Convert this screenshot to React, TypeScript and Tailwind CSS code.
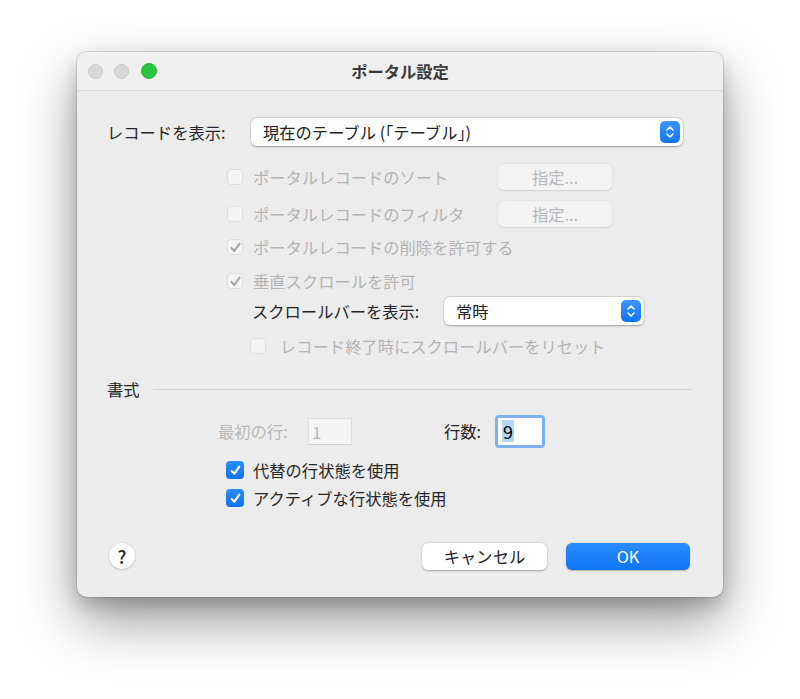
import React from "react";

const font = "font-['Noto_Sans_CJK_JP','Noto_Sans',sans-serif]";

const Stepper = () => (
  <div className="w-[20px] h-[22px] rounded-[5px] bg-gradient-to-b from-[#3b95fc] to-[#0c74f5] flex items-center justify-center">
    <svg width="10" height="14" viewBox="0 0 10 14" fill="none">
      <path d="M2 5 L5 2 L8 5" stroke="white" strokeWidth="1.6" strokeLinecap="round" strokeLinejoin="round" />
      <path d="M2 9 L5 12 L8 9" stroke="white" strokeWidth="1.6" strokeLinecap="round" strokeLinejoin="round" />
    </svg>
  </div>
);

interface PopupProps {
  value: string;
  className: string;
}

const Popup = ({ value, className }: PopupProps) => (
  <div
    className={`h-[28px] bg-white rounded-[6px] shadow-[0_0.5px_2px_rgba(0,0,0,0.3),0_0_0_0.5px_rgba(0,0,0,0.08)] flex items-center justify-between pl-[12px] pr-[3px] ${className}`}
  >
    <span className="text-[16.3px] leading-none text-[#222]">{value}</span>
    <Stepper />
  </div>
);

interface CheckProps {
  checked?: boolean;
  disabled?: boolean;
}

const Check = ({ checked, disabled }: CheckProps) => {
  if (disabled) {
    return (
      <div className="w-[16px] h-[16px] rounded-[4px] bg-[#f4f4f4] border border-[#dedede] flex items-center justify-center shrink-0">
        {checked && (
          <svg width="13" height="13" viewBox="0 0 12 12" fill="none">
            <path d="M2.3 6.3 L4.9 9.2 L9.8 2.4" stroke="#a6a6a6" strokeWidth="1.9" strokeLinecap="round" strokeLinejoin="round" />
          </svg>
        )}
      </div>
    );
  }
  return (
    <div className="w-[18px] h-[18px] rounded-[4px] bg-gradient-to-b from-[#2b8dfc] to-[#0a73f3] flex items-center justify-center shrink-0">
      <svg width="13" height="13" viewBox="0 0 12 12" fill="none">
        <path d="M2.5 6.5 L5 9 L9.5 2.5" stroke="white" strokeWidth="2" strokeLinecap="round" strokeLinejoin="round" />
      </svg>
    </div>
  );
};

const DisabledButton = ({ label }: { label: string }) => (
  <div className="w-[114px] h-[26px] rounded-[6px] bg-[#f3f3f3] shadow-[0_0.5px_1.5px_rgba(0,0,0,0.12)] flex items-center justify-center text-[16.3px] leading-none text-[#b8b8b8]">
    {label}
  </div>
);

export default function App() {
  return (
    <div className={`w-[800px] h-[699px] bg-white pt-[52px] pl-[77px] ${font}`}>
      <div className="w-[646px] h-[545px] rounded-[10px] bg-[#ececec] overflow-hidden shadow-[0_24px_55px_rgba(0,0,0,0.4),0_8px_18px_rgba(0,0,0,0.18),0_0_0_1px_rgba(0,0,0,0.12)]">
        {/* title bar */}
        <div className="relative h-[39px] bg-[#f0f0ef] border-b border-[#d9d9d9] flex items-center pl-[11px]">
          <div className="flex items-center">
            <div className="w-[15px] h-[15px] rounded-full bg-[#d8d8d8] border border-[#c9c9c9]" />
            <div className="w-[15px] h-[15px] rounded-full bg-[#d8d8d8] border border-[#c9c9c9] ml-[11px]" />
            <div className="w-[16px] h-[16px] rounded-full bg-[#2ac641] border border-[#25b23a] ml-[12px]" />
          </div>
          <div className="absolute inset-0 flex items-center justify-center text-[16.3px] font-bold text-[#3a3a3a] leading-none">
            ポータル設定
          </div>
        </div>

        <div className="px-[30px]">
          {/* record source */}
          <div className="mt-[27px] h-[28px] flex items-center">
            <span className="w-[144px] text-[16.3px] leading-none text-[#262626]">レコードを表示:</span>
            <Popup value="現在のテーブル (「テーブル」)" className="w-[432px]" />
          </div>

          <div className="pl-[120px]">
            <div className="mt-[18px] h-[26px] flex items-center">
              <Check disabled />
              <span className="ml-[10px] w-[245px] text-[16.3px] leading-none text-[#b4b4b4]">ポータルレコードのソート</span>
              <DisabledButton label="指定..." />
            </div>
            <div className="mt-[11px] h-[26px] flex items-center">
              <Check disabled />
              <span className="ml-[10px] w-[245px] text-[16.3px] leading-none text-[#b4b4b4]">ポータルレコードのフィルタ</span>
              <DisabledButton label="指定..." />
            </div>
            <div className="mt-[10px] h-[20px] flex items-center">
              <Check disabled checked />
              <span className="ml-[10px] text-[16.3px] leading-none text-[#b4b4b4]">ポータルレコードの削除を許可する</span>
            </div>
            <div className="mt-[14px] h-[20px] flex items-center">
              <Check disabled checked />
              <span className="ml-[10px] text-[16.3px] leading-none text-[#b4b4b4]">垂直スクロールを許可</span>
            </div>

            {/* scrollbar options */}
            <div className="mt-[6px] h-[28px] flex items-center pl-[25px]">
              <span className="w-[192px] text-[16.3px] leading-none text-[#262626]">スクロールバーを表示:</span>
              <Popup value="常時" className="w-[200px]" />
            </div>
            <div className="mt-[11px] h-[20px] flex items-center pl-[23px]">
              <Check disabled />
              <span className="ml-[14px] text-[16.3px] leading-none text-[#b4b4b4]">レコード終了時にスクロールバーをリセット</span>
            </div>
          </div>

          {/* format section */}
          <div className="mt-[23px] h-[20px] flex items-center">
            <span className="text-[16.3px] leading-none text-[#262626]">書式</span>
            <div className="ml-[13px] w-[539px] h-px bg-[#d2d2d2]" />
          </div>

          <div className="mt-[15px] h-[34px] flex items-center pl-[111px]">
            <span className="w-[90px] text-[16.3px] leading-none text-[#b8b8b8]">最初の行:</span>
            <div className="w-[44px] h-[27px] bg-[#f4f4f4] border border-[#dedede] border-b-[#d2d2d2] flex items-center pl-[3px] text-[17px] leading-none text-[#b8b8b8]">
              1
            </div>
            <span className="ml-[92px] w-[51px] text-[16.3px] leading-none text-[#262626]">行数:</span>
            <div className="w-[50px] h-[33px] rounded-[4px] bg-[#7eb0f7] p-[3px]">
              <div className="w-full h-full bg-white flex items-center pl-[4px]">
                <span className="bg-[#b4d5fe] text-[18px] leading-[22px] text-black px-[1px]">9</span>
              </div>
            </div>
          </div>

          <div className="pl-[119px]">
            <div className="mt-[12px] h-[20px] flex items-center">
              <Check />
              <span className="ml-[9px] text-[16.3px] leading-none text-[#262626]">代替の行状態を使用</span>
            </div>
            <div className="mt-[8px] h-[20px] flex items-center">
              <Check />
              <span className="ml-[9px] text-[16.3px] leading-none text-[#262626]">アクティブな行状態を使用</span>
            </div>
          </div>

          {/* footer buttons */}
          <div className="mt-[34px] h-[28px] flex items-center">
            <div className="ml-[2px] w-[26px] h-[26px] rounded-full bg-white shadow-[0_0.5px_2px_rgba(0,0,0,0.3)] flex items-center justify-center text-[18px] font-medium leading-none text-[#222]">
              ?
            </div>
            <div className="ml-[287px] w-[125px] h-[27px] rounded-[6px] bg-white shadow-[0_0.5px_2px_rgba(0,0,0,0.3)] flex items-center justify-center text-[16.3px] leading-none text-[#222]">
              キャンセル
            </div>
            <div className="ml-[19px] w-[124px] h-[27px] rounded-[6px] bg-gradient-to-b from-[#2a8cfd] to-[#0d74f4] shadow-[0_0.5px_1.5px_rgba(0,0,0,0.25)] flex items-center justify-center text-[16.3px] leading-none text-white">
              OK
            </div>
          </div>
        </div>
      </div>
    </div>
  );
}
